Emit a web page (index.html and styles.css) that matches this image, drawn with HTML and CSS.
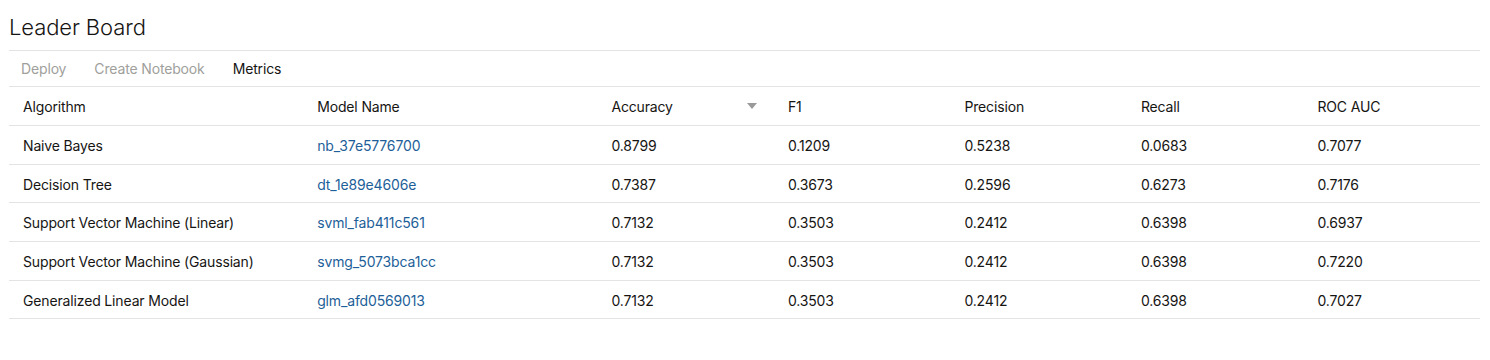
FILE: index.html
```html
<!DOCTYPE html>
<html>
<head>
<meta charset="utf-8">
<link rel="stylesheet" href="styles.css">
</head>
<body>
<div class="page">
  <h1 class="title">Leader Board</h1>
  <div class="toolbar">
    <span class="tab disabled">Deploy</span>
    <span class="tab disabled">Create Notebook</span>
    <span class="tab">Metrics</span>
  </div>
  <table class="grid">
    <colgroup>
      <col class="wide"><col class="wide"><col class="num"><col class="num"><col class="num"><col class="num"><col class="num">
    </colgroup>
    <thead>
      <tr>
        <th>Algorithm</th>
        <th>Model Name</th>
        <th class="sorted"><span class="hd">Accuracy<span class="arrow"></span></span></th>
        <th>F1</th>
        <th>Precision</th>
        <th>Recall</th>
        <th>ROC AUC</th>
      </tr>
    </thead>
    <tbody>
      <tr><td>Naive Bayes</td><td><a class="link">nb_37e5776700</a></td><td>0.8799</td><td>0.1209</td><td>0.5238</td><td>0.0683</td><td>0.7077</td></tr>
      <tr><td>Decision Tree</td><td><a class="link">dt_1e89e4606e</a></td><td>0.7387</td><td>0.3673</td><td>0.2596</td><td>0.6273</td><td>0.7176</td></tr>
      <tr><td>Support Vector Machine (Linear)</td><td><a class="link">svml_fab411c561</a></td><td>0.7132</td><td>0.3503</td><td>0.2412</td><td>0.6398</td><td>0.6937</td></tr>
      <tr><td>Support Vector Machine (Gaussian)</td><td><a class="link">svmg_5073bca1cc</a></td><td>0.7132</td><td>0.3503</td><td>0.2412</td><td>0.6398</td><td>0.7220</td></tr>
      <tr><td>Generalized Linear Model</td><td><a class="link">glm_afd0569013</a></td><td>0.7132</td><td>0.3503</td><td>0.2412</td><td>0.6398</td><td>0.7027</td></tr>
    </tbody>
  </table>
</div>
</body>
</html>
```
FILE: styles.css
```css
html, body {
  margin: 0;
  padding: 0;
  background: #ffffff;
}
body {
  font-family: Inter, "Liberation Sans", sans-serif;
  font-size: 14px;
  letter-spacing: -0.15px;
  color: #161513;
}
.page {
  padding: 0 10px 0 9px;
}
.title {
  margin: 0;
  font-size: 22px;
  font-weight: 300;
  line-height: 51px;
  height: 51px;
  border-bottom: 1px solid #e3e3e3;
  box-sizing: border-box;
  padding-top: 2px;
  letter-spacing: -0.1px;
}
.toolbar {
  display: flex;
  align-items: center;
  height: 36px;
  padding-left: 12px;
  gap: 28px;
  border-bottom: 1px solid #e3e3e3;
  box-sizing: border-box;
}
.tab {
  font-size: 14px;
  color: #161513;
}
.tab.disabled {
  color: #a09f9c;
}
.grid {
  width: 100%;
  border-collapse: collapse;
  table-layout: fixed;
}
col.wide { width: 20%; }
col.num { width: 12%; }
.grid th, .grid td {
  text-align: left;
  font-weight: 400;
  padding: 0 14px;
  border-bottom: 1px solid #e3e3e3;
  white-space: nowrap;
}
.grid td {
  padding-top: 1px;
  height: 36.7px;
}
.grid th {
  height: 38px;
}
.hd {
  display: flex;
  align-items: center;
  justify-content: space-between;
  padding-right: 3px;
}
.arrow {
  width: 0;
  height: 0;
  border-left: 5px solid transparent;
  border-right: 5px solid transparent;
  border-top: 6px solid #9a9a9a;
}
.link {
  color: #1e5f99;
  text-decoration: none;
}
```
